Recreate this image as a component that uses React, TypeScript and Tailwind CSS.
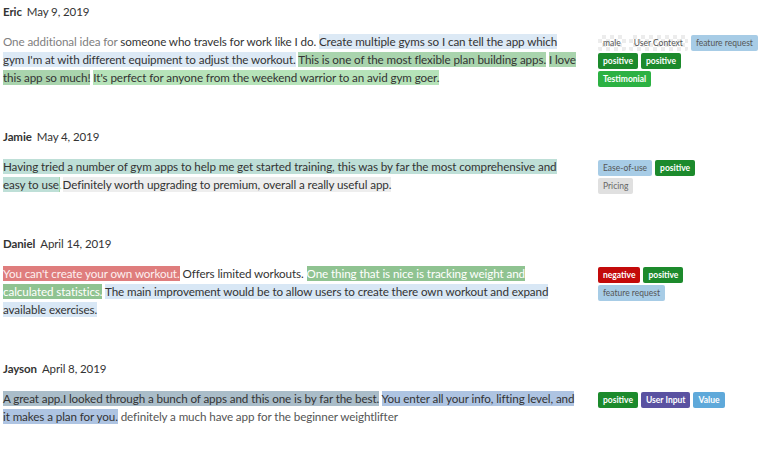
import React from "react";

type Seg = { text: string; cls?: string };
type Tag = { label: string; cls: string };

type Review = {
  name: string;
  date: string;
  segs: Seg[];
  tagRows: Tag[][];
};

const blue = "bg-[#dce9f5]";
const green = "bg-[#a9d4ad]";
const lightGreen = "bg-[#b6e3b9]";

const featureTag = "bg-[#a7cce6] text-[#555]";
const positiveTag = "bg-[#1c8a2c] text-white font-bold";
const checker =
  "bg-[image:repeating-conic-gradient(#ececec_0%_25%,#ffffff_0%_50%)] bg-[length:8px_8px] text-[#555]";

const reviews: Review[] = [
  {
    name: "Eric",
    date: "May 9, 2019",
    segs: [
      { text: "One additional idea for ", cls: "text-[#808080]" },
      { text: "someone who travels for work like I do. " },
      {
        text: "Create multiple gyms so I can tell the app which gym I'm at with different equipment to adjust the workout.",
        cls: blue,
      },
      { text: " " },
      { text: "This is one of the most flexible plan building apps.", cls: green },
      { text: " " },
      { text: "I love this app so much!", cls: green },
      { text: " " },
      {
        text: "It's perfect for anyone from the weekend warrior to an avid gym goer.",
        cls: lightGreen,
      },
    ],
    tagRows: [
      [
        { label: "male", cls: checker },
        { label: "User Context", cls: checker },
        { label: "feature request", cls: featureTag },
      ],
      [
        { label: "positive", cls: positiveTag },
        { label: "positive", cls: positiveTag },
      ],
      [{ label: "Testimonial", cls: "bg-[#2cb143] text-white font-bold" }],
    ],
  },
  {
    name: "Jamie",
    date: "May 4, 2019",
    segs: [
      {
        text: "Having tried a number of gym apps to help me get started training, this was by far the most comprehensive and easy to use",
        cls: "bg-[#bedfd7]",
      },
      { text: ".", cls: "bg-[#a4d8a8] text-[#a4d8a8] tracking-[-2px]" },
      { text: " " },
      {
        text: "Definitely worth upgrading to premium, overall a really useful app.",
        cls: "bg-[#eeeeee]",
      },
    ],
    tagRows: [
      [
        { label: "Ease-of-use", cls: featureTag },
        { label: "positive", cls: positiveTag },
      ],
      [{ label: "Pricing", cls: "bg-[#e0e0e0] text-[#666]" }],
    ],
  },
  {
    name: "Daniel",
    date: "April 14, 2019",
    segs: [
      { text: "You can't create your own workout.", cls: "bg-[#df7d7d] text-[#fdf0f0]" },
      { text: " Offers limited workouts. " },
      {
        text: "One thing that is nice is tracking weight and calculated statistics.",
        cls: "bg-[#8fc391] text-white",
      },
      { text: " " },
      {
        text: "The main improvement would be to allow users to create there own workout and expand available exercises.",
        cls: "bg-[#d8e7f5]",
      },
    ],
    tagRows: [
      [
        { label: "negative", cls: "bg-[#c30a0a] text-white font-bold" },
        { label: "positive", cls: positiveTag },
      ],
      [{ label: "feature request", cls: featureTag }],
    ],
  },
  {
    name: "Jayson",
    date: "April 8, 2019",
    segs: [
      {
        text: "A great app.I looked through a bunch of apps and this one is by far the best.",
        cls: "bg-[#aabdc9]",
      },
      { text: " " },
      {
        text: "You enter all your info, lifting level, and it makes a plan for you.",
        cls: "bg-[#aec4e2]",
      },
      { text: " definitely a much have app for the beginner weightlifter", cls: "text-[#555]" },
    ],
    tagRows: [
      [
        { label: "positive", cls: positiveTag },
        { label: "User Input", cls: "bg-[#5a52a1] text-white font-bold" },
        { label: "Value", cls: "bg-[#5fa9da] text-white font-bold" },
      ],
    ],
  },
];

function ReviewBlock({ review }: { review: Review }) {
  return (
    <div className="flex flex-col">
      <div className="flex items-baseline gap-[5px] text-[11.5px] leading-[18px] tracking-[-0.1px] text-[#333]">
        <span className="font-bold">{review.name}</span>
        <span>{review.date}</span>
      </div>
      <div className="mt-3 flex items-start">
        <p className="w-[575px] shrink-0 text-[11.65px] leading-[18px] tracking-[-0.1px] text-[#333]">
          {review.segs.map((s, i) => (
            <span key={i} className={`py-[1px] ${s.cls ?? ""}`}>
              {s.text}
            </span>
          ))}
        </p>
        <div className="ml-[20px] mt-[2px] flex flex-col gap-[2px]">
          {review.tagRows.map((row, i) => (
            <div key={i} className="flex gap-[3px]">
              {row.map((t, j) => (
                <span
                  key={j}
                  className={`flex h-4 items-center rounded-[2px] px-[5px] text-[8.5px] leading-none ${t.cls}`}
                >
                  {t.label}
                </span>
              ))}
            </div>
          ))}
        </div>
      </div>
    </div>
  );
}

export default function App() {
  return (
    <div className="flex min-h-[461px] w-[768px] flex-col gap-[41px] bg-white pl-[3px] pt-[3px] font-['Lato','Liberation_Sans',sans-serif]">
      {reviews.map((r) => (
        <ReviewBlock key={r.name} review={r} />
      ))}
    </div>
  );
}
